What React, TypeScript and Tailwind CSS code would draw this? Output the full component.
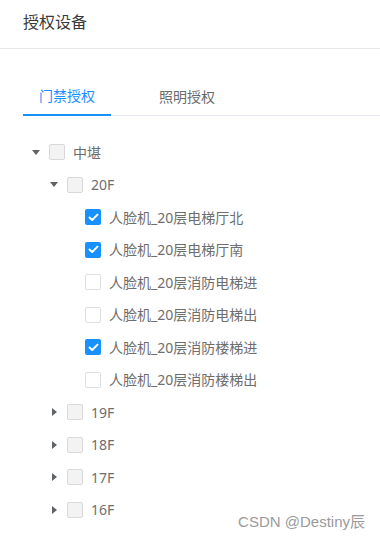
import React from "react";

type Node = {
  label: string;
  level: number;
  caret?: "down" | "right";
  state: "parent" | "checked" | "empty";
};

const rows: Node[] = [
  { label: "中堪", level: 0, caret: "down", state: "parent" },
  { label: "20F", level: 1, caret: "down", state: "parent" },
  { label: "人脸机_20层电梯厅北", level: 2, state: "checked" },
  { label: "人脸机_20层电梯厅南", level: 2, state: "checked" },
  { label: "人脸机_20层消防电梯进", level: 2, state: "empty" },
  { label: "人脸机_20层消防电梯出", level: 2, state: "empty" },
  { label: "人脸机_20层消防楼梯进", level: 2, state: "checked" },
  { label: "人脸机_20层消防楼梯出", level: 2, state: "empty" },
  { label: "19F", level: 1, caret: "right", state: "parent" },
  { label: "18F", level: 1, caret: "right", state: "parent" },
  { label: "17F", level: 1, caret: "right", state: "parent" },
  { label: "16F", level: 1, caret: "right", state: "parent" },
];

const indent = ["pl-[27px]", "pl-[45px]", "pl-[63px]"];

function Caret({ dir }: { dir?: "down" | "right" }) {
  if (!dir) return <span className="w-[18px] shrink-0" />;
  return (
    <span className="flex w-[18px] shrink-0 items-center justify-center">
      {dir === "down" ? (
        <svg width="8" height="5" viewBox="0 0 8 5">
          <path d="M0 0 L8 0 L4 5 Z" fill="#5f6368" />
        </svg>
      ) : (
        <svg width="5" height="8" viewBox="0 0 5 8">
          <path d="M0 0 L5 4 L0 8 Z" fill="#5f6368" />
        </svg>
      )}
    </span>
  );
}

function Box({ state }: { state: Node["state"] }) {
  if (state === "checked") {
    return (
      <span className="ml-[4px] flex h-[16px] w-[16px] shrink-0 items-center justify-center rounded-[2px] bg-[#1890ff]">
        <svg width="11" height="9" viewBox="0 0 11 9">
          <path d="M1.5 4.5 L4.2 7 L9.5 1.6" stroke="#fff" strokeWidth="2" fill="none" strokeLinecap="round" strokeLinejoin="round" />
        </svg>
      </span>
    );
  }
  return (
    <span
      className={
        state === "parent"
          ? "ml-[4px] h-[16px] w-[16px] shrink-0 rounded-[2px] border border-[#d9d9d9] bg-[#f3f3f3]"
          : "ml-[4px] h-[16px] w-[16px] shrink-0 rounded-[2px] border border-[#dcdfe6] bg-white"
      }
    />
  );
}

export default function App() {
  return (
    <div
      className="relative h-[542px] w-[380px] overflow-hidden bg-white"
      style={{ fontFamily: '"Noto Sans", "Noto Sans CJK SC", sans-serif' }}
    >
      {/* Header */}
      <div className="flex h-[49px] items-center border-b border-[#e8e8e8] pb-[4px] pl-[23px] text-[16px] text-[#3a3a3a]">
        授权设备
      </div>

      {/* Tabs */}
      <div className="ml-[23px] mt-[27px] flex h-[40px] gap-[32px] border-b border-[#e4e7ed]">
        <div className="-mb-px flex h-[40px] items-center border-b-2 border-[#1890ff] px-[16px] text-[14px] text-[#1890ff]">
          门禁授权
        </div>
        <div className="flex h-[40px] items-center px-[16px] text-[14px] text-[#6a6a6a]">
          照明授权
        </div>
      </div>

      {/* Tree */}
      <div className="mt-[20px]">
        {rows.map((r, i) => (
          <div key={i} className={`flex h-[32.5px] items-center ${indent[r.level]}`}>
            <Caret dir={r.caret} />
            <Box state={r.state} />
            <span className="ml-[8px] text-[14px] text-[#6e6e6e]">{r.label}</span>
          </div>
        ))}
      </div>

      {/* Watermark */}
      <div
        className="absolute bottom-[9px] right-[15px] text-[15px] text-[#9a9a9a]"
        style={{ fontFamily: '"Liberation Sans", "Noto Sans CJK SC", sans-serif' }}
      >
        CSDN @Destiny辰
      </div>
    </div>
  );
}
